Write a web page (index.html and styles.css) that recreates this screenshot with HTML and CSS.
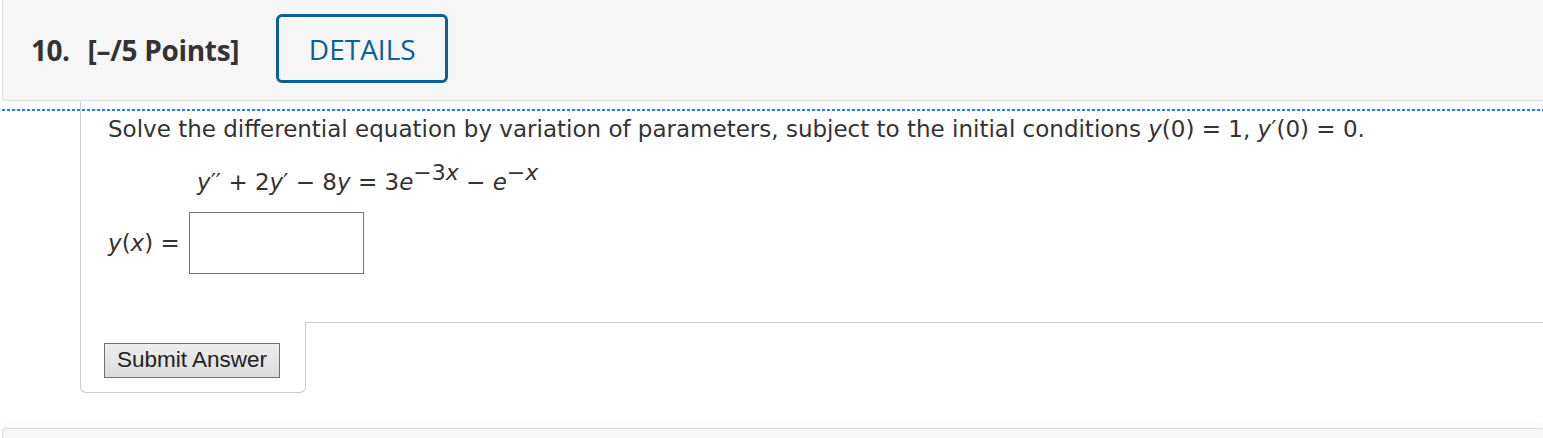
FILE: index.html
```html
<!DOCTYPE html>
<html>
<head>
<meta charset="utf-8">
<link rel="stylesheet" href="styles.css">
</head>
<body>
<div class="header">
  <span class="qnum">10.</span>
  <span class="pts">[–/5 Points]</span>
  <button class="details">DETAILS</button>
</div>
<div class="main">
  <div class="question">
    <p class="prompt">Solve the differential equation by variation of parameters, subject to the initial conditions <i>y</i>(0) = 1, <i>y</i>′(0) = 0.</p>
    <p class="eq"><i>y</i>′′ + 2<i>y</i>′ − 8<i>y</i> = 3<i>e</i><sup>−3<i>x</i></sup> − <i>e</i><sup>−<i>x</i></sup></p>
    <div class="answer">
      <span class="lhs"><i>y</i>(<i>x</i>) =</span>
      <input class="box" type="text">
    </div>
  </div>
  <div class="footer">
    <div class="tab"><button class="submit">Submit Answer</button></div>
    <div class="rest"></div>
  </div>
</div>
<div class="next"></div>
</body>
</html>
```
FILE: styles.css
```css
html, body {
  margin: 0;
  padding: 0;
  background: #fff;
  overflow: hidden;
}
body {
  width: 1543px;
  height: 438px;
  color: #333;
}
.header {
  margin-left: 2px;
  height: 101px;
  box-sizing: border-box;
  background: #f6f6f6;
  border-left: 1px solid #ddd;
  border-bottom: 1px solid #ddd;
  border-bottom-left-radius: 4px;
  display: flex;
  align-items: center;
  padding-left: 28px;
  font-family: "Open Sans", sans-serif;
  color: #333;
}
.qnum {
  font-weight: 700;
  font-size: 28px;
  letter-spacing: -0.5px;
  margin-right: 18px;
}
.pts {
  font-weight: 700;
  font-size: 28px;
  letter-spacing: -0.3px;
  margin-right: 37px;
}
.details {
  font-family: "Open Sans", sans-serif;
  font-size: 28px;
  color: #0b6196;
  background: transparent;
  border: 3px solid #0b6196;
  border-radius: 6px;
  width: 172px;
  height: 69px;
  margin-top: -3px;
  padding: 0;
}
.main {
  background-image: linear-gradient(to right, #1f80e0 3px, transparent 3px);
  background-size: 5px 2px;
  background-repeat: repeat-x;
  background-position: 2px 8px;
  padding-top: 1px;
}
.question {
  margin-left: 80px;
  border-left: 1px solid #ccc;
  padding-left: 27px;
  height: 220px;
  font-family: "DejaVu Sans", Verdana, sans-serif;
  font-size: 23px;
}
.question i {
  font-style: italic;
}
.prompt {
  margin: 0;
  padding-top: 13px;
  line-height: 28px;
}
.eq {
  margin: 0;
  padding-top: 25px;
  padding-left: 89px;
  line-height: 28px;
}
.eq sup {
  font-size: 22px;
  vertical-align: 10px;
  line-height: 0;
}
.answer {
  display: flex;
  align-items: center;
  margin-top: 16px;
}
.lhs {
  margin-right: 9px;
}
.box {
  width: 175px;
  height: 62px;
  box-sizing: border-box;
  border: 1px solid #767676;
  margin: 0;
  padding: 0;
  background: #fff;
}
.footer {
  display: flex;
  margin-left: 80px;
}
.tab {
  width: 226px;
  box-sizing: border-box;
  border-left: 1px solid #ccc;
  border-right: 1px solid #ccc;
  border-bottom: 1px solid #ccc;
  border-radius: 0 0 6px 6px;
  padding: 21px 0 14px 23px;
  height: 71px;
}
.rest {
  flex: 1;
  border-top: 1px solid #ccc;
}
.submit {
  font-family: "Liberation Sans", Arial, sans-serif;
  font-size: 22.5px;
  color: #222;
  width: 176px;
  height: 35px;
  box-sizing: border-box;
  border: 1px solid #707070;
  background: linear-gradient(#ededed, #dcdcdc);
  padding: 0 0 2px;
  margin: 0;
  display: block;
}
.next {
  margin-top: 35px;
  margin-left: 2px;
  height: 20px;
  background: #f6f6f6;
  border-top: 1px solid #ddd;
  border-left: 1px solid #ddd;
  border-top-left-radius: 4px;
  box-shadow: 0 -4px 6px rgba(0,0,0,0.03);
}
```
